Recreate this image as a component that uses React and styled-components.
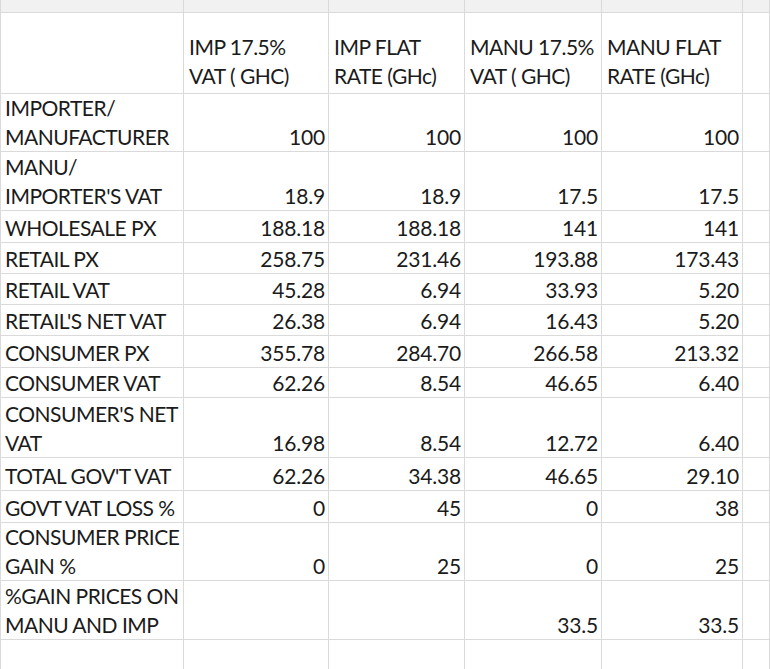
import React from 'react';
import styled, { createGlobalStyle } from 'styled-components';

const GlobalStyle = createGlobalStyle`
  html, body {
    margin: 0;
    padding: 0;
    background: #ffffff;
  }
  body {
    font-family: Lato, "Open Sans", sans-serif;
    color: #1b1b1b;
  }
`;

const grid = '#dadada';

const Sheet = styled.div`
  display: grid;
  grid-template-columns: 184px 145px 136px 137px 141px 1fr;
  grid-template-rows: 13px 81px 58px 59px 32px 31px 31px 31px 32px 30px 60px 33px 32px 58px 59px 40px;
  width: 770px;
  height: 669px;
  overflow: hidden;
`;

const HeadCell = styled.div`
  box-sizing: border-box;
  background: #f1f1f1;
  border-right: 1px solid ${grid};
  border-bottom: 1px solid ${grid};
  border-left: ${(p) => (p.$first ? `1px solid ${grid}` : 'none')};
`;

const Cell = styled.div`
  box-sizing: border-box;
  border-right: 1px solid ${grid};
  border-bottom: 1px solid ${grid};
  border-left: ${(p) => (p.$first ? `1px solid ${grid}` : 'none')};
  display: flex;
  align-items: flex-end;
  justify-content: ${(p) => (p.$num ? 'flex-end' : 'flex-start')};
  padding: 0 ${(p) => (p.$num ? '3px' : '0')} ${(p) => p.$pb || 0}px ${(p) => (p.$num ? '0' : p.$first ? '4px' : '5px')};
  font-size: 21px;
  line-height: 29px;
  letter-spacing: ${(p) => (p.$num ? '-0.2px' : '-0.5px')};
  white-space: pre;
  overflow: hidden;
`;

const columns = [
  'IMP 17.5%\nVAT ( GHC)',
  'IMP FLAT\nRATE (GHc)',
  'MANU 17.5%\nVAT ( GHC)',
  'MANU FLAT\nRATE (GHc)',
];

const rows = [
  ['IMPORTER/\nMANUFACTURER', '100', '100', '100', '100'],
  ["MANU/\nIMPORTER'S VAT", '18.9', '18.9', '17.5', '17.5'],
  ['WHOLESALE PX', '188.18', '188.18', '141', '141'],
  ['RETAIL PX', '258.75', '231.46', '193.88', '173.43'],
  ['RETAIL VAT', '45.28', '6.94', '33.93', '5.20'],
  ["RETAIL'S NET VAT", '26.38', '6.94', '16.43', '5.20'],
  ['CONSUMER PX', '355.78', '284.70', '266.58', '213.32'],
  ['CONSUMER VAT', '62.26', '8.54', '46.65', '6.40'],
  ["CONSUMER'S NET\nVAT", '16.98', '8.54', '12.72', '6.40'],
  ["TOTAL GOV'T VAT", '62.26', '34.38', '46.65', '29.10'],
  ['GOVT VAT LOSS %', '0', '45', '0', '38'],
  ['CONSUMER PRICE\nGAIN %', '0', '25', '0', '25'],
  ['%GAIN PRICES ON\nMANU AND IMP', '', '', '33.5', '33.5'],
  ['', '', '', '', ''],
];

export default function App() {
  return (
    <>
      <GlobalStyle />
      <Sheet>
        {Array.from({ length: 6 }).map((_, i) => (
          <HeadCell key={`h${i}`} $first={i === 0} />
        ))}

        <Cell $first />
        {columns.map((c) => (
          <Cell key={c} $pb={3}>
            {c}
          </Cell>
        ))}
        <Cell />

        {rows.map((row, r) => (
          <React.Fragment key={r}>
            <Cell $first>{row[0]}</Cell>
            {row.slice(1).map((v, i) => (
              <Cell key={i} $num>
                {v}
              </Cell>
            ))}
            <Cell />
          </React.Fragment>
        ))}
      </Sheet>
    </>
  );
}
